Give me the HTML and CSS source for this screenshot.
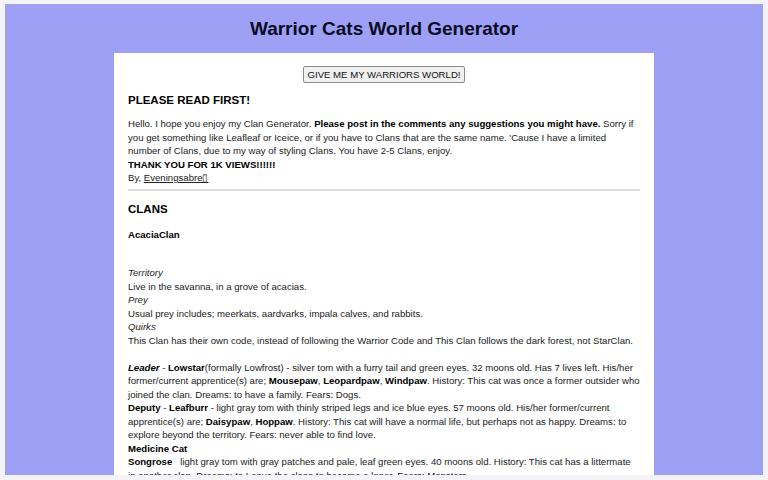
FILE: index.html
```html
<!DOCTYPE html>
<html lang="en">
<head>
  <meta charset="UTF-8" />
  <title>Warrior Cats World Generator</title>
  <link rel="stylesheet" href="styles.css">
</head>
<body>
  <div class="frame">
    <h1>Warrior Cats World Generator</h1>

    <div class="card">
      <div class="gen">
        <button>GIVE ME MY WARRIORS WORLD!</button>
      </div>

      <h3>PLEASE READ FIRST!</h3>
      <p>Hello. I hope you enjoy my Clan Generator. <b>Please post in the comments any suggestions you might have.</b> Sorry if you get something like Leafleaf or Iceice, or if you have to Clans that are the same name. 'Cause I have a limited number of Clans, due to my way of styling Clans. You have 2-5 Clans, enjoy.<br>
      <b>THANK YOU FOR 1K VIEWS!!!!!!</b><br>
      By, <a href="#">Eveningsabre&#9647;</a></p>

      <hr>

      <h3 class="clans">CLANS</h3>
      <h4>AcaciaClan</h4>

      <div class="clan">
        <i>Territory</i><br>
        Live in the savanna, in a grove of acacias.<br>
        <i>Prey</i><br>
        Usual prey includes; meerkats, aardvarks, impala calves, and rabbits.<br>
        <i>Quirks</i><br>
        This Clan has their own code, instead of following the Warrior Code and This Clan follows the dark forest, not StarClan.
      </div>

      <div class="clan">
        <b><i>Leader</i></b> - <b>Lowstar</b>(formally Lowfrost) - silver tom with a furry tail and green eyes. 32 moons old. Has 7 lives left. His/her former/current apprentice(s) are; <b>Mousepaw</b>, <b>Leopardpaw</b>, <b>Windpaw</b>. History: This cat was once a former outsider who joined the clan. Dreams: to have a family. Fears: Dogs.<br>
        <b>Deputy</b> - <b>Leafburr</b> - light gray tom with thinly striped legs and ice blue eyes. 57 moons old. His/her former/current apprentice(s) are; <b>Daisypaw</b>, <b>Hoppaw</b>. History: This cat will have a normal life, but perhaps not as happy. Dreams: to explore beyond the territory. Fears: never able to find love.<br>
        <b>Medicine Cat</b><br>
        <b>Songrose</b> &nbsp; light gray tom with gray patches and pale, leaf green eyes. 40 moons old. History: This cat has a littermate in another clan. Dreams: to Leave the clans to become a loner. Fears: Monsters.
      </div>
    </div>
  </div>
</body>
</html>
```

FILE: styles.css
```css
html {
  background: #f3f3f8;
}

body {
  margin: 0;
  font-family: 'Liberation Sans', Arial, sans-serif;
  color: #222;
}

.frame {
  margin: 4px 5px 0;
  height: 471px;
  overflow: hidden;
  background: #9da0f5;
  padding-top: 13px;
  box-sizing: border-box;
}

h1 {
  margin: 0 0 13px;
  font-size: 19px;
  line-height: 23px;
  text-align: center;
  color: #0b0b26;
}

.card {
  width: 540px;
  margin: 0 auto;
  background: #fff;
  padding: 13px 14px 20px;
  box-sizing: border-box;
  font-size: 9.6px;
  line-height: 13.5px;
}

.gen {
  text-align: center;
}

button {
  font-family: 'Liberation Sans', Arial, sans-serif;
  font-size: 9.6px;
  line-height: 11px;
  padding: 2px 4px;
  border: 1px solid #8a8a8a;
  border-radius: 2px;
  background: #f0f0f0;
  color: #111;
}

h3 {
  margin: 10px 0 10px;
  font-size: 11.5px;
  line-height: 14px;
  color: #000;
}

h3.clans {
  margin: 11px 0 12px;
}

h4 {
  margin: 0 0 25px;
  font-size: 9.6px;
  line-height: 13.5px;
  color: #000;
}

p {
  margin: 0;
}

b {
  color: #000;
}

a {
  color: #222;
}

hr {
  border: none;
  border-top: 2px solid #ddd;
  margin: 4px 0 0;
}

.clan {
  margin-bottom: 13.5px;
}
```
